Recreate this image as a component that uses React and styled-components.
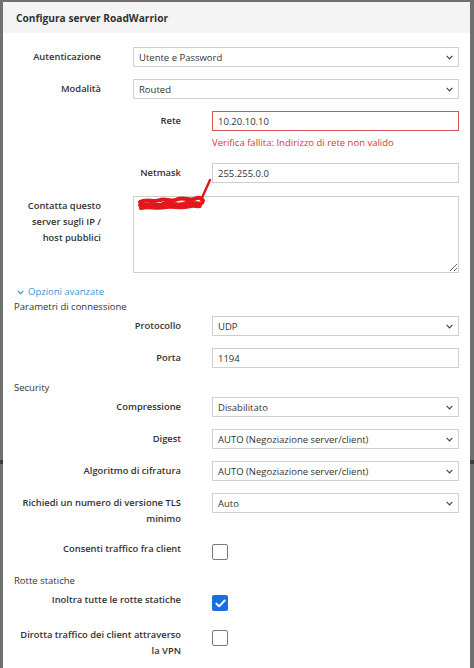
import React from "react";
import styled, { createGlobalStyle } from "styled-components";

const GlobalStyle = createGlobalStyle`
  html, body {
    margin: 0;
    padding: 0;
  }
  body {
    background: linear-gradient(to bottom, #707070 0, #707070 460px, #3c3c3c 460px, #3c3c3c 464px, #707070 464px);
    font-family: "Open Sans", "Liberation Sans", sans-serif;
    color: #333;
    overflow: hidden;
  }
`;

const Modal = styled.div`
  margin: 2px 4px 0 3px;
  background: #fff;
  min-height: 666px;
`;

const Header = styled.div`
  height: 31px;
  background: #f4f4f4;
  display: flex;
  align-items: center;
  padding-left: 13px;
  font-size: 10.2px;
  font-weight: 700;
  color: #333;
`;

const Body = styled.div`
  padding: 14px 11px 0 11px;
  font-size: 9.5px;
`;

const Row = styled.div`
  display: grid;
  grid-template-columns: ${(p) => (p.$wide ? "167px" : "87px")} 1fr;
  column-gap: ${(p) => (p.$wide ? "31px" : "32px")};
  margin-bottom: ${(p) => (p.$mb === undefined ? 12 : p.$mb)}px;
  align-items: start;
`;

const Label = styled.label`
  text-align: right;
  font-weight: 600;
  font-size: 9.4px;
  line-height: 16px;
  padding-top: 2px;
  color: #333;
`;

const Control = styled.div`
  position: relative;
`;

const inputBase = `
  box-sizing: border-box;
  width: 100%;
  height: 20px;
  border: 1px solid #cfcfcf;
  background: #fff;
  font-family: "Open Sans", "Liberation Sans", sans-serif;
  font-size: 9.5px;
  color: #333;
  padding: 0 5px;
  margin: 0;
  outline: none;
  border-radius: 0;
`;

const Input = styled.input`
  ${inputBase}
  display: block;
  border-color: ${(p) => (p.$error ? "#d9534f" : "#cfcfcf")};
`;

const Select = styled.select`
  ${inputBase}
  display: block;
  appearance: none;
  -webkit-appearance: none;
  padding-right: 18px;
`;

const Chevron = styled.svg`
  position: absolute;
  right: 6px;
  top: 8px;
  width: 7px;
  height: 5px;
  pointer-events: none;
`;

const TextArea = styled.textarea`
  box-sizing: border-box;
  display: block;
  width: 100%;
  height: 77px;
  border: 1px solid #cfcfcf;
  margin: 0;
  padding: 4px 5px;
  font-family: "Open Sans", "Liberation Sans", sans-serif;
  font-size: 9.5px;
  resize: vertical;
  outline: none;
`;

const ErrorText = styled.div`
  color: #d7343c;
  line-height: 16px;
  margin-top: 4px;
`;

const Scribble = styled.svg`
  position: absolute;
  left: 0;
  top: -17px;
  width: 80px;
  height: 34px;
  pointer-events: none;
`;

const AdvancedLink = styled.a`
  display: flex;
  align-items: center;
  gap: 4px;
  margin-top: 12px;
  line-height: 14px;
  color: #3a95d6;
  text-decoration: none;
  padding-left: 3px;
  cursor: pointer;
`;

const SectionTitle = styled.div`
  line-height: 16px;
  margin-bottom: 1px;
  color: #333;
`;

const Box = styled.span`
  box-sizing: border-box;
  display: flex;
  align-items: center;
  justify-content: center;
  width: 16px;
  height: 16px;
  margin-top: 5px;
  border-radius: 2px;
  border: ${(p) => (p.$checked ? "none" : "1.5px solid #7a7a7a")};
  background: ${(p) => (p.$checked ? "#1a6fe0" : "#fff")};
`;

const SelectField = ({ value }) => (
  <Control>
    <Select defaultValue={value}>
      <option>{value}</option>
    </Select>
    <Chevron viewBox="0 0 7 5">
      <path d="M0.7 0.9 L3.5 3.8 L6.3 0.9" fill="none" stroke="#444" strokeWidth="1.2" />
    </Chevron>
  </Control>
);

const Checkbox = ({ checked }) => (
  <Box $checked={checked}>
    {checked && (
      <svg width="11" height="9" viewBox="0 0 11 9">
        <path d="M1.3 4.6 L4.1 7.3 L9.7 1.5" fill="none" stroke="#fff" strokeWidth="1.9" strokeLinecap="round" strokeLinejoin="round" />
      </svg>
    )}
  </Box>
);

export default function App() {
  return (
    <>
      <GlobalStyle />
      <Modal>
        <Header>Configura server RoadWarrior</Header>
        <Body>
          <Row>
            <Label>Autenticazione</Label>
            <SelectField value="Utente e Password" />
          </Row>
          <Row>
            <Label>Modalità</Label>
            <SelectField value="Routed" />
          </Row>
          <Row $wide $mb={12}>
            <Label>Rete</Label>
            <Control>
              <Input $error defaultValue="10.20.10.10" />
              <ErrorText>Verifica fallita: Indirizzo di rete non valido</ErrorText>
            </Control>
          </Row>
          <Row $wide $mb={13}>
            <Label>Netmask</Label>
            <Control>
              <Input defaultValue="255.255.0.0" />
            </Control>
          </Row>
          <Row $mb={0}>
            <Label>Contatta questo server sugli IP / host pubblici</Label>
            <Control>
              <TextArea />
              <Scribble viewBox="0 0 80 34">
                <path d="M77 1 L68 21" stroke="#e3161c" strokeWidth="2.4" fill="none" strokeLinecap="round" />
                <path
                  d="M7 23 C14 19 20 24 27 21 C33 19 38 24 45 20 C52 18 58 23 64 19 C68 18 70 21 70 22 M7 26 C15 24 22 28 30 25 C38 23 45 28 53 24 C59 22 64 26 69 24 M8 29 C16 27 24 30 33 28 C42 27 50 30 58 27 C62 26 65 28 67 27"
                  stroke="#e3161c"
                  strokeWidth="4"
                  fill="none"
                  strokeLinecap="round"
                />
              </Scribble>
            </Control>
          </Row>
          <AdvancedLink>
            <svg width="7" height="5" viewBox="0 0 7 5">
              <path d="M0.8 1 L3.5 3.7 L6.2 1" fill="none" stroke="#3a95d6" strokeWidth="1.2" />
            </svg>
            Opzioni avanzate
          </AdvancedLink>
          <SectionTitle>Parametri di connessione</SectionTitle>
          <Row $wide>
            <Label>Protocollo</Label>
            <SelectField value="UDP" />
          </Row>
          <Row $wide $mb={12}>
            <Label>Porta</Label>
            <Control>
              <Input defaultValue="1194" />
            </Control>
          </Row>
          <SectionTitle>Security</SectionTitle>
          <Row $wide>
            <Label>Compressione</Label>
            <SelectField value="Disabilitato" />
          </Row>
          <Row $wide>
            <Label>Digest</Label>
            <SelectField value="AUTO (Negoziazione server/client)" />
          </Row>
          <Row $wide>
            <Label>Algoritmo di cifratura</Label>
            <SelectField value="AUTO (Negoziazione server/client)" />
          </Row>
          <Row $wide>
            <Label>Richiedi un numero di versione TLS minimo</Label>
            <SelectField value="Auto" />
          </Row>
          <Row $wide $mb={13}>
            <Label>Consenti traffico fra client</Label>
            <Checkbox />
          </Row>
          <SectionTitle>Rotte statiche</SectionTitle>
          <Row $wide $mb={14}>
            <Label>Inoltra tutte le rotte statiche</Label>
            <Checkbox checked />
          </Row>
          <Row $wide $mb={0}>
            <Label>Dirotta traffico dei client attraverso la VPN</Label>
            <Checkbox />
          </Row>
        </Body>
      </Modal>
    </>
  );
}
